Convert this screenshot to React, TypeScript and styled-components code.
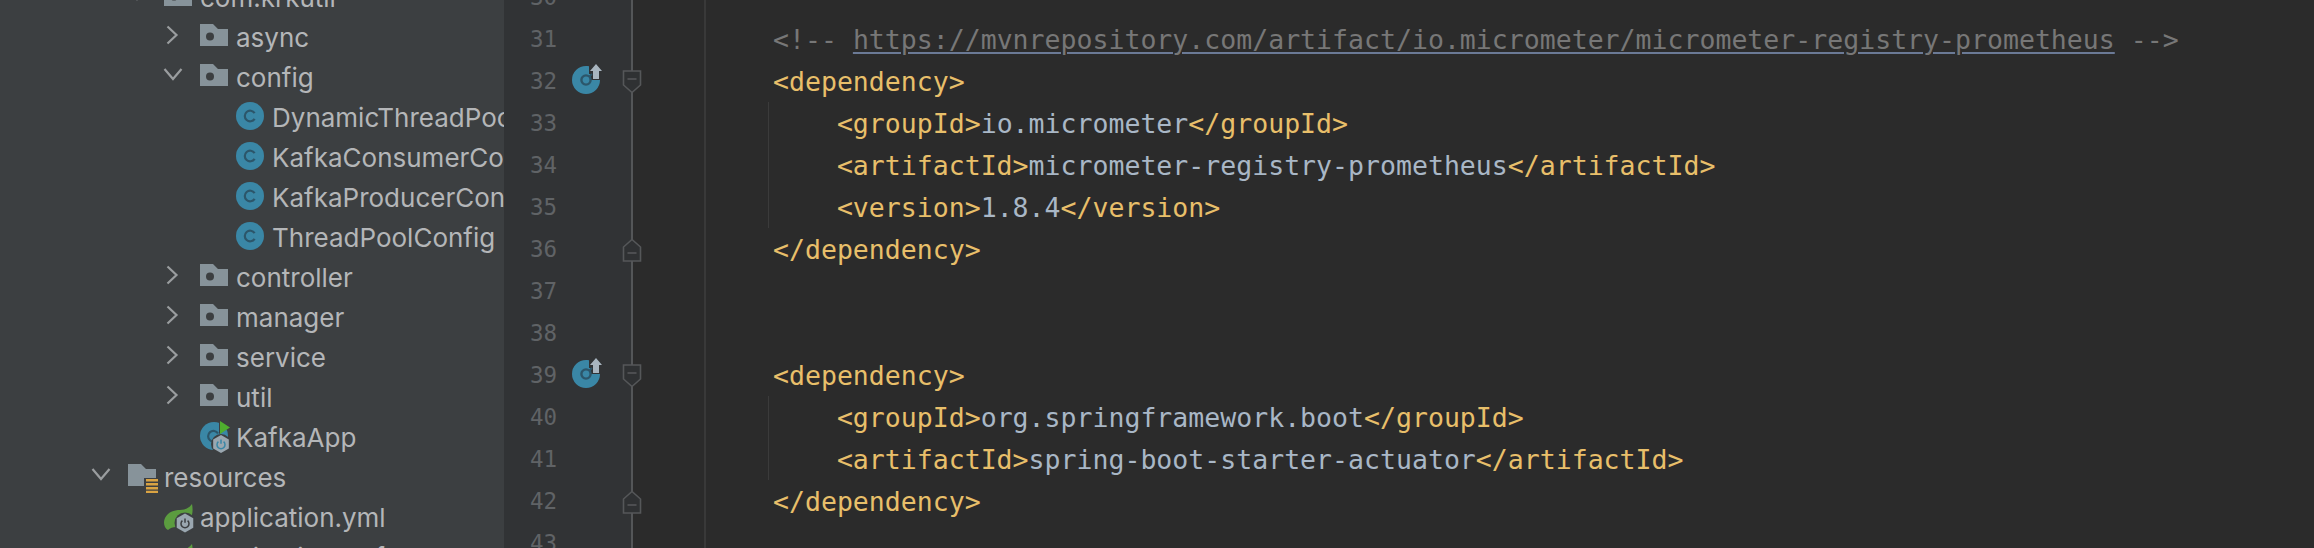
import React from "react";
import styled, { createGlobalStyle } from "styled-components";

const GlobalStyle = createGlobalStyle`
  html, body {
    margin: 0;
    padding: 0;
    height: 548px;
    overflow: hidden;
    background: #2b2b2b;
  }
`;

const Window = styled.div`
  display: flex;
  width: 2314px;
  height: 548px;
  overflow: hidden;
`;

const Sidebar = styled.div`
  width: 504px;
  flex: none;
  height: 548px;
  overflow: hidden;
  background: #3c3f41;
`;

const Tree = styled.div`
  margin-top: -23px;
`;

const TreeRow = styled.div<{ $indent: number }>`
  display: flex;
  align-items: center;
  height: 40px;
  padding-left: ${(p) => p.$indent}px;
  font-family: Inter, "Noto Sans", sans-serif;
  font-size: 26px;
  color: #b4b6b8;
  white-space: nowrap;
`;

const ChevronSlot = styled.span`
  display: flex;
  align-items: center;
  justify-content: center;
  width: 20px;
  height: 40px;
  margin-right: 16px;
  flex: none;
`;

const IconSlot = styled.span`
  display: flex;
  align-items: center;
  width: 28px;
  margin-right: 8px;
  flex: none;
`;

const Raised = styled.svg`
  margin-top: -4px;
  overflow: visible;
`;

const Lowered = styled.svg`
  margin-top: 3px;
  overflow: visible;
`;

const Editor = styled.div`
  flex: 1;
  height: 548px;
  overflow: hidden;
  background: #2b2b2b;
`;

const Lines = styled.div`
  margin-top: -24px;
`;

const Line = styled.div`
  display: flex;
  height: 42px;
`;

const Gutter = styled.div`
  display: flex;
  align-items: center;
  position: relative;
  width: 127px;
  flex: none;
  background: #313335;
  border-right: 2px solid #545658;
`;

const LineNumber = styled.span`
  width: 53px;
  flex: none;
  text-align: right;
  font-family: "DejaVu Sans Mono", monospace;
  font-size: 22.5px;
  color: #606366;
`;

const GutterIcon = styled.span`
  display: flex;
  margin-left: 15px;
  margin-top: -2px;
`;

const FoldMark = styled.svg`
  position: absolute;
  right: -11px;
  top: 10px;
`;

const MarginSpace = styled.div`
  width: 71px;
  flex: none;
  border-right: 2px solid #393939;
`;

const Code = styled.div<{ $guide: boolean }>`
  display: flex;
  align-items: center;
  margin-left: 62px;
  padding-left: ${(p) => (p.$guide ? 4 : 5)}px;
  border-left: ${(p) => (p.$guide ? "1px solid #3b3b3b" : "none")};
  font-family: "DejaVu Sans Mono", monospace;
  font-size: 26.54px;
  white-space: pre;
`;

const Tag = styled.span`
  color: #e8bf6a;
`;

const Value = styled.span`
  color: #a9b7c6;
`;

const Comment = styled.span`
  color: #777777;
`;

const CommentLink = styled.span`
  color: #777777;
  text-decoration: underline;
  text-decoration-color: #6b7a96;
  text-decoration-thickness: 2px;
  text-underline-offset: 3px;
`;

const Chevron = ({ open }: { open: boolean }) => (
  <Raised width="20" height="20" viewBox="0 0 20 20" fill="none" stroke="#9a9d9f" strokeWidth="2.2">
    {open ? <path d="M.5 4l8.5 10 8.5-10" /> : <path d="M3.5 1.5l9 8.5-9 8.5" />}
  </Raised>
);

const FolderShape = () => <path d="M0 0h13l5 5h10v17H0z" fill="#87939a" />;

const PackageIcon = () => (
  <Raised width="28" height="22" viewBox="0 0 28 22">
    <FolderShape />
    <circle cx="10" cy="12.5" r="4" fill="#3c3f41" />
  </Raised>
);

const ResourceIcon = () => (
  <Lowered width="32" height="29" viewBox="0 0 32 29">
    <FolderShape />
    <path d="M16 14h16v15H16z" fill="#3c3f41" />
    <path d="M18 15h12v2.4H18zM18 19h12v2.4H18zM18 23h12v2.4H18zM18 26.8h12v2.2H18z" fill="#d9a343" />
  </Lowered>
);

const ClassIcon = () => (
  <svg width="28" height="28" viewBox="0 0 28 28" style={{ marginTop: "-2px" }}>
    <circle cx="14" cy="14" r="14" fill="#3a87a6" />
    <path d="M18.6 11.2a5.3 5.3 0 1 0 0 5.6" fill="none" stroke="#2c566a" strokeWidth="2.2" />
  </svg>
);

const PowerHex = ({ cx, cy, r, ring }: { cx: number; cy: number; r: number; ring: string }) => (
  <g>
    <path
      d={`M${cx - r * 0.87} ${cy - r * 0.5}L${cx} ${cy - r}L${cx + r * 0.87} ${cy - r * 0.5}V${cy + r * 0.5}L${cx} ${cy + r}L${cx - r * 0.87} ${cy + r * 0.5}Z`}
      fill="#9aa7b0"
    />
    <path
      d={`M${cx - 2.6} ${cy - 2.4}a4 4 0 1 0 5.2 0M${cx} ${cy - 4.4}v4.2`}
      fill="none"
      stroke={ring}
      strokeWidth="1.5"
    />
  </g>
);

const AppIcon = () => (
  <svg width="32" height="32" viewBox="0 0 32 32" style={{ overflow: "visible" }}>
    <circle cx="14" cy="15" r="14" fill="#3a87a6" />
    <path d="M18 12.5a5.3 5.3 0 1 0 0 5.4" fill="none" stroke="#2c566a" strokeWidth="2.2" />
    <path d="M19 -1l11 7-11 7z" fill="#3c3f41" />
    <path d="M20 0l10 6.5-10 6.5z" fill="#4fae2e" />
    <circle cx="21" cy="23" r="10" fill="#3c3f41" />
    <PowerHex cx={21} cy={23} r={9} ring="#3a87a6" />
  </svg>
);

const SpringIcon = () => (
  <svg width="30" height="29" viewBox="0 0 30 29" style={{ overflow: "visible", marginTop: "2px" }}>
    <path
      d="M28 0c1 5 1 11-2 15-2 5-9 9-14 8-3 0-6 1-8 3C0 24-1 18 1 14 4 8 10 6 16 6c5 0 9-2 12-6z"
      fill="#5b9c3f"
    />
    <circle cx="21" cy="19" r="10.5" fill="#3c3f41" />
    <PowerHex cx={21} cy={19} r={9.5} ring="#3c3f41" />
  </svg>
);

const OverrideIcon = () => (
  <svg width="30" height="30" viewBox="0 0 30 30" style={{ overflow: "visible" }}>
    <path d="M28 15a14 14 0 1 1-14-14c1 0 2 0 3 .3V9h1.500v6z" fill="#3a87a6" />
    <circle cx="14" cy="15" r="4.6" fill="none" stroke="#2c566a" strokeWidth="2.4" />
    <path d="M17 12l3-3" stroke="#2c566a" strokeWidth="1.800" />
    <path d="M24 -1l6 7h-3v8h-6V6h-3z" fill="#a8b5bf" />
  </svg>
);

const FoldOpen = () => (
  <FoldMark width="20" height="24" viewBox="0 0 20 24" fill="#2f3133" stroke="#555759" strokeWidth="1.6">
    <path d="M1.500 1h17v14L10 22.500 1.500 15z" />
    <path d="M5.500 9h9" />
  </FoldMark>
);

const FoldClose = () => (
  <FoldMark width="20" height="24" viewBox="0 0 20 24" fill="#2f3133" stroke="#555759" strokeWidth="1.6">
    <path d="M1.500 23h17V9L10 1.500 1.500 9z" />
    <path d="M5.500 15h9" />
  </FoldMark>
);

type TreeItem = {
  label: string;
  indent: number;
  icon: React.ReactNode;
  open?: boolean;
};

const treeItems: TreeItem[] = [
  { label: "com.krkutil", indent: 128, icon: <PackageIcon />, open: true },
  { label: "async", indent: 164, icon: <PackageIcon />, open: false },
  { label: "config", indent: 164, icon: <PackageIcon />, open: true },
  { label: "DynamicThreadPoolConfig", indent: 236, icon: <ClassIcon /> },
  { label: "KafkaConsumerConfig", indent: 236, icon: <ClassIcon /> },
  { label: "KafkaProducerConfig", indent: 236, icon: <ClassIcon /> },
  { label: "ThreadPoolConfig", indent: 236, icon: <ClassIcon /> },
  { label: "controller", indent: 164, icon: <PackageIcon />, open: false },
  { label: "manager", indent: 164, icon: <PackageIcon />, open: false },
  { label: "service", indent: 164, icon: <PackageIcon />, open: false },
  { label: "util", indent: 164, icon: <PackageIcon />, open: false },
  { label: "KafkaApp", indent: 200, icon: <AppIcon /> },
  { label: "resources", indent: 92, icon: <ResourceIcon />, open: true },
  { label: "application.yml", indent: 164, icon: <SpringIcon /> },
  { label: "application-kafka.yml", indent: 164, icon: <SpringIcon /> },
];

type CodeLine = {
  no: number;
  guide?: boolean;
  override?: boolean;
  fold?: "open" | "close";
  content?: React.ReactNode;
};

const indent = "    ";

const codeLines: CodeLine[] = [
  { no: 30 },
  {
    no: 31,
    content: (
      <>
        <Comment>{"<!-- "}</Comment>
        <CommentLink>https://mvnrepository.com/artifact/io.micrometer/micrometer-registry-prometheus</CommentLink>
        <Comment>{" -->"}</Comment>
      </>
    ),
  },
  { no: 32, override: true, fold: "open", content: <Tag>{"<dependency>"}</Tag> },
  {
    no: 33,
    guide: true,
    content: (
      <>
        <Tag>{indent + "<groupId>"}</Tag>
        <Value>io.micrometer</Value>
        <Tag>{"</groupId>"}</Tag>
      </>
    ),
  },
  {
    no: 34,
    guide: true,
    content: (
      <>
        <Tag>{indent + "<artifactId>"}</Tag>
        <Value>micrometer-registry-prometheus</Value>
        <Tag>{"</artifactId>"}</Tag>
      </>
    ),
  },
  {
    no: 35,
    guide: true,
    content: (
      <>
        <Tag>{indent + "<version>"}</Tag>
        <Value>1.8.4</Value>
        <Tag>{"</version>"}</Tag>
      </>
    ),
  },
  { no: 36, fold: "close", content: <Tag>{"</dependency>"}</Tag> },
  { no: 37 },
  { no: 38 },
  { no: 39, override: true, fold: "open", content: <Tag>{"<dependency>"}</Tag> },
  {
    no: 40,
    guide: true,
    content: (
      <>
        <Tag>{indent + "<groupId>"}</Tag>
        <Value>org.springframework.boot</Value>
        <Tag>{"</groupId>"}</Tag>
      </>
    ),
  },
  {
    no: 41,
    guide: true,
    content: (
      <>
        <Tag>{indent + "<artifactId>"}</Tag>
        <Value>spring-boot-starter-actuator</Value>
        <Tag>{"</artifactId>"}</Tag>
      </>
    ),
  },
  { no: 42, fold: "close", content: <Tag>{"</dependency>"}</Tag> },
  { no: 43 },
];

export default function App() {
  return (
    <Window>
      <GlobalStyle />
      <Sidebar>
        <Tree>
          {treeItems.map((item) => (
            <TreeRow key={item.label} $indent={item.indent}>
              {item.open !== undefined && (
                <ChevronSlot>
                  <Chevron open={item.open} />
                </ChevronSlot>
              )}
              <IconSlot>{item.icon}</IconSlot>
              {item.label}
            </TreeRow>
          ))}
        </Tree>
      </Sidebar>
      <Editor>
        <Lines>
          {codeLines.map((line) => (
            <Line key={line.no}>
              <Gutter>
                <LineNumber>{line.no}</LineNumber>
                {line.override && (
                  <GutterIcon>
                    <OverrideIcon />
                  </GutterIcon>
                )}
                {line.fold === "open" && <FoldOpen />}
                {line.fold === "close" && <FoldClose />}
              </Gutter>
              <MarginSpace />
              <Code $guide={!!line.guide}>{line.content}</Code>
            </Line>
          ))}
        </Lines>
      </Editor>
    </Window>
  );
}
